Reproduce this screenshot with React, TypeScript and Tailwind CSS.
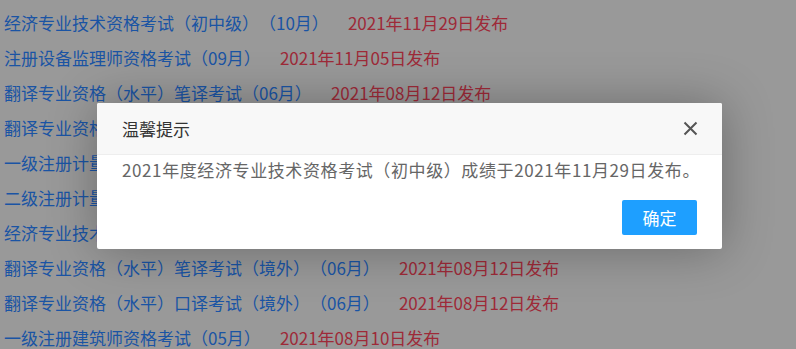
const rows = [
  { name: "经济专业技术资格考试（初中级）（10月）", date: "2021年11月29日发布" },
  { name: "注册设备监理师资格考试（09月）", date: "2021年11月05日发布" },
  { name: "翻译专业资格（水平）笔译考试（06月）", date: "2021年08月12日发布" },
  { name: "翻译专业资格（水平）口译考试（06月）", date: "2021年08月12日发布" },
  { name: "一级注册计量师资格考试（06月）", date: "2021年08月10日发布" },
  { name: "二级注册计量师资格考试（06月）", date: "2021年08月10日发布" },
  { name: "经济专业技术资格考试（高级）（06月）", date: "2021年08月10日发布" },
  { name: "翻译专业资格（水平）笔译考试（境外）（06月）", date: "2021年08月12日发布" },
  { name: "翻译专业资格（水平）口译考试（境外）（06月）", date: "2021年08月12日发布" },
  { name: "一级注册建筑师资格考试（05月）", date: "2021年08月10日发布" },
]

export default function App() {
  return (
    <div
      className="relative w-[796px] h-[349px] overflow-hidden bg-[#999999] [text-spacing-trim:space-all]"
      style={{ fontFamily: '"Noto Sans CJK SC", "Noto Sans", sans-serif' }}
    >
      <ul className="pt-[5px] pl-[4px] text-[17px] leading-[35px]">
        {rows.map((r, i) => (
          <li key={i} className="flex whitespace-nowrap">
            <a className="text-[#1a54a4]">{r.name}</a>
            <span className="ml-[19px] text-[#9e2a38]">{r.date}</span>
          </li>
        ))}
      </ul>

      {/* layer dialog */}
      <div className="absolute left-[97px] top-[103px] w-[625px] h-[146px] bg-white rounded-[2px] shadow-[1px_1px_50px_rgba(0,0,0,0.3)] flex flex-col">
        <div className="h-[52px] shrink-0 flex items-center justify-between bg-[#f8f8f8] border-b border-[#eeeeee] pl-[25px] pr-[24px] rounded-t-[2px]">
          <span className="text-[17px] text-[#333333]">温馨提示</span>
          <svg width="15" height="15" viewBox="0 0 15 15">
            <path d="M1.5 1.5 L13.5 13.5 M13.5 1.5 L1.5 13.5" stroke="#555555" strokeWidth="2" />
          </svg>
        </div>
        <div className="px-[25px] pt-[3px] text-[17px] leading-[24px] text-[#666666] whitespace-nowrap tracking-[0.6px]">
          2021年度经济专业技术资格考试（初中级）成绩于2021年11月29日发布。
        </div>
        <div className="flex justify-end pr-[25px] mt-[18px]">
          <button className="w-[75px] h-[35px] rounded-[2px] bg-[#1e9fff] text-white text-[17px]">确定</button>
        </div>
      </div>
    </div>
  )
}
